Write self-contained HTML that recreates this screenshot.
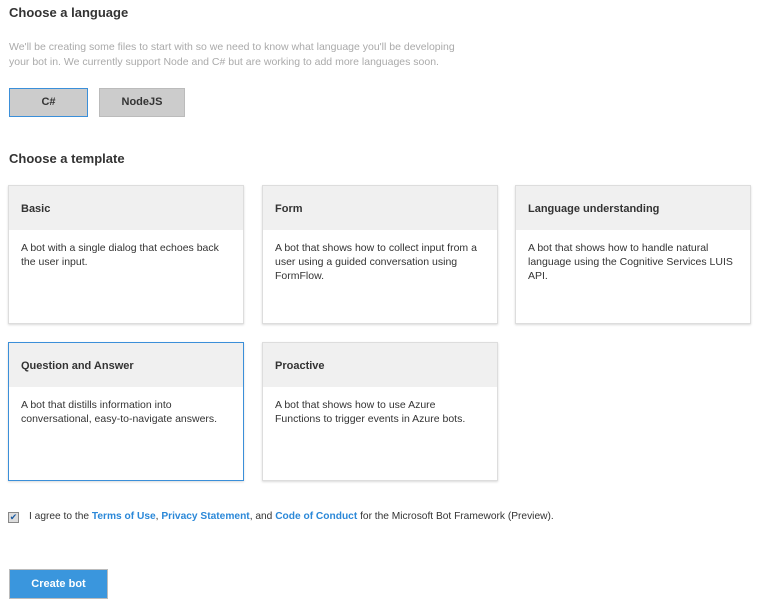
<!DOCTYPE html>
<html><head><style>
body{margin:0;width:768px;height:611px;background:#fff;font-family:"Liberation Sans",sans-serif;position:relative;overflow:hidden;color:#333}
.a{position:absolute}
h{position:absolute;font-size:13px;font-weight:bold;color:#333}
.btn{position:absolute;background:#ccc;border:1px solid #bbb;box-sizing:border-box;font-size:11px;font-weight:bold;color:#333;text-align:center;line-height:26px}
.card{position:absolute;width:236px;height:139px;border:1px solid #ddd;box-sizing:border-box;background:#fff;box-shadow:0 1px 2px rgba(0,0,0,.15)}
.card .hd{height:44px;background:#f0f0f0;font-size:11px;font-weight:bold;color:#333;padding-left:12px;line-height:46px}
.card .bd{padding:11px 12px;font-size:10.5px;line-height:14px;color:#333;white-space:nowrap}
.sel{border:1px solid #3b8fd9}
a{color:#2b88d8;font-weight:bold;text-decoration:none}
</style></head><body>
<h style="left:9px;top:5px">Choose a language</h>
<div class="a" style="left:9px;top:40px;font-size:10.5px;line-height:15px;color:#aaa">We'll be creating some files to start with so we need to know what language you'll be developing<br>your bot in. We currently support Node and C# but are working to add more languages soon.</div>
<div class="btn" style="left:9px;top:88px;width:79px;height:29px;border-color:#3b8fd9">C#</div>
<div class="btn" style="left:99px;top:88px;width:86px;height:29px">NodeJS</div>
<h style="left:9px;top:151px">Choose a template</h>
<div class="card" style="left:8px;top:185px"><div class="hd">Basic</div><div class="bd">A bot with a single dialog that echoes back<br>the user input.</div></div>
<div class="card" style="left:262px;top:185px"><div class="hd">Form</div><div class="bd">A bot that shows how to collect input from a<br>user using a guided conversation using<br>FormFlow.</div></div>
<div class="card" style="left:515px;top:185px"><div class="hd">Language understanding</div><div class="bd">A bot that shows how to handle natural<br>language using the Cognitive Services LUIS<br>API.</div></div>
<div class="card sel" style="left:8px;top:342px"><div class="hd">Question and Answer</div><div class="bd">A bot that distills information into<br>conversational, easy-to-navigate answers.</div></div>
<div class="card" style="left:262px;top:342px"><div class="hd">Proactive</div><div class="bd">A bot that shows how to use Azure<br>Functions to trigger events in Azure bots.</div></div>
<div class="a" style="left:8px;top:512px;width:9px;height:9px;border:1px solid #888;background:#ddd;font-size:9px;line-height:9px;text-align:center;color:#1a5aa0">✔</div>
<div class="a" style="left:29px;top:511px;font-size:10.2px;color:#333">I agree to the <a>Terms of Use</a>, <a>Privacy Statement</a>, and <a>Code of Conduct</a> for the Microsoft Bot Framework (Preview).</div>
<div class="a" style="left:9px;top:569px;width:99px;height:30px;background:#3a96dd;border:1px solid #bbb;box-sizing:border-box;color:#fff;font-size:11px;font-weight:bold;text-align:center;line-height:28px">Create bot</div>
</body></html>
